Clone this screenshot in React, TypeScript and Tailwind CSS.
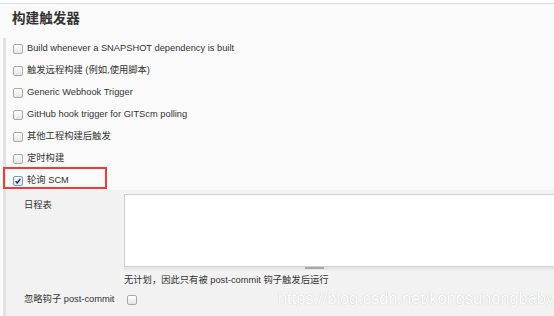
import type { ReactElement } from 'react'

const triggers = [
  'Build whenever a SNAPSHOT dependency is built',
  '触发远程构建 (例如,使用脚本)',
  'Generic Webhook Trigger',
  'GitHub hook trigger for GITScm polling',
  '其他工程构建后触发',
  '定时构建',
]

function Box({ checked = false }: { checked?: boolean }): ReactElement {
  return (
    <span
      className={`flex h-[10px] w-[10px] shrink-0 items-center justify-center rounded-[2px] border ${
        checked ? 'border-[#7a9cc4] bg-gradient-to-b from-[#f4f8fc] to-[#d6e4f2]' : 'border-[#a9a9a9] bg-gradient-to-b from-white to-[#e4e4e4]'
      }`}
    >
      {checked && (
        <svg viewBox="0 0 10 10" className="h-[8px] w-[8px]">
          <path d="M2 5.2 L4 7.4 L8 2.4" fill="none" stroke="#222" strokeWidth="1.7" />
        </svg>
      )}
    </span>
  )
}

function Row({ label, checked }: { label: string; checked?: boolean }): ReactElement {
  return (
    <div className="flex h-[22px] items-center gap-[4px] pl-[7px]">
      <Box checked={checked} />
      <span>{label}</span>
    </div>
  )
}

export default function App(): ReactElement {
  return (
    <div className="relative h-[316px] w-[554px] overflow-hidden bg-[#fafafa] font-['Liberation_Sans','Noto_Sans_CJK_SC',sans-serif] text-[9.3px] text-[#333]">
      <div className="h-[3px] bg-white" />
      <div className="border-t border-[#dcdcdc]" />
      <h2 className="pl-[12px] pt-[4px] text-[13.6px] font-bold leading-[22px] text-[#333]">构建触发器</h2>
      <div className="ml-[3px] mt-[8px] flex flex-col border-l-[3px] border-[#e2e2e2]">
        <div>
          {triggers.map((t) => (
            <Row key={t} label={t} />
          ))}
          <Row label="轮询 SCM" checked />
        </div>
        <div className="mt-[-2px] flex flex-col bg-[#f2f2f2] pb-[10px]">
          <div className="flex pt-[4px]">
            <span className="w-[118px] shrink-0 pl-[18px] pt-[5px]">日程表</span>
            <div className="flex-1">
              <div className="h-[73px] border border-r-0 border-[#cfcfcf] bg-white" />
              <div className="flex h-[3px] justify-center bg-[#e6e6e6]">
                <span className="ml-[-50px] h-[2px] w-[19px] bg-[#a8a8a8]" />
              </div>
            </div>
          </div>
          <p className="pl-[118px] pt-[3px] leading-[14px]">无计划，因此只有被 post-commit 钩子触发后运行</p>
          <div className="mt-[6px] flex items-center">
            <span className="w-[121px] shrink-0 pl-[18px]">忽略钩子 post-commit</span>
            <Box />
          </div>
        </div>
      </div>
      <div className="absolute left-[3px] top-[167px] h-[22px] w-[104px] border-2 border-[#f23a3a]" />
      <span className="absolute left-[278px] top-[286px] text-[16.4px] text-white [text-shadow:0_0_1px_#b8b8b8]">
        https://blog.csdn.net/kongsuhongbaby
      </span>
    </div>
  )
}
